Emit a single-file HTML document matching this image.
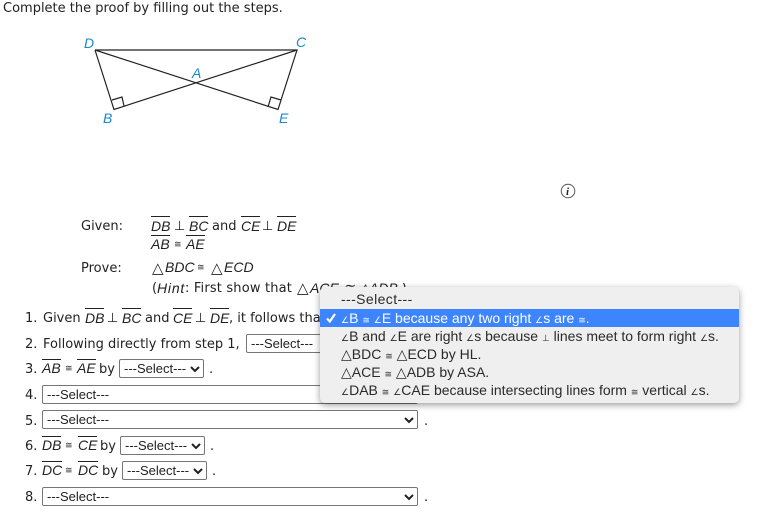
<!DOCTYPE html>
<html><head><meta charset="utf-8">
<style>
html,body{margin:0;padding:0;background:#fff}
body{width:780px;height:527px;position:relative;overflow:hidden;font-family:"DejaVu Sans",sans-serif;font-size:13px;color:#222}
.t{position:absolute;white-space:nowrap;line-height:16px;height:16px}
.m{font-family:"Liberation Sans",sans-serif;font-style:italic;font-size:14px}
.o,.n{position:absolute;white-space:nowrap;line-height:16px;height:16px;font-family:"Liberation Sans",sans-serif;font-style:italic;font-size:14px}
.o:before{content:"";position:absolute;left:0;right:0;top:-1px;border-top:1px solid #222}
.o.h:before{top:-2px}
.c{position:absolute;white-space:nowrap;line-height:16px;font-size:9px;font-family:"DejaVu Sans",sans-serif}
.s{position:absolute;box-sizing:border-box;height:19px;border:1px solid #767676;border-radius:2px;background:#fff;font:13px/17px "Liberation Sans",sans-serif;color:#222;padding-left:4px;white-space:nowrap;overflow:hidden}
.s svg{position:absolute;right:3px;top:5px}
.p{position:absolute;left:320px;top:287px;width:419px;height:116px;background:#efefef;border-radius:5px;box-shadow:0 2px 7px rgba(0,0,0,.4);font:14px/19px "Liberation Sans",sans-serif;color:#2a2a2a}
.r{position:absolute;left:0;width:419px;height:18px;padding-left:21px;box-sizing:border-box;white-space:nowrap}
.a{font-size:9px;font-family:"DejaVu Sans",sans-serif}
.d{font-family:"DejaVu Sans";font-size:14px}
.x{font-family:"DejaVu Sans";font-size:15px}
</style></head><body>
<div class="t" style="left:3px;top:1px">Complete the proof by filling out the steps.</div>

<svg style="position:absolute;left:0;top:0" width="400" height="140">
<g fill="none" stroke="#222" stroke-width="1.200">
<path d="M95 50H297L278 109.500L95 50"/>
<path d="M95 50L114 109.500L297 50"/>
<path d="M112 100L122 97L124 106"/>
<path d="M268 107L271 97L281 100"/>
</g>
<g font-family="Liberation Sans" font-style="italic" font-size="14" fill="#1b87c9">
<text x="84" y="48">D</text><text x="296" y="47">C</text><text x="192" y="78">A</text><text x="103" y="123">B</text><text x="279" y="123">E</text>
</g>
</svg>

<svg style="position:absolute;left:560px;top:183px" width="16" height="16">
<circle cx="8" cy="8" r="6.800" fill="none" stroke="#555"/>
<text x="6" y="12" font-family="Liberation Serif" font-style="italic" font-weight="bold" font-size="11" fill="#222">i</text>
</svg>

<div class="t" style="left:81px;top:219px">Given:</div>
<div class="o h" style="left:151px;top:218px">DB</div><div class="t" style="left:174px;top:219px">⊥</div><div class="o h" style="left:189px;top:218px">BC</div><div class="t" style="left:212px;top:219px">and</div><div class="o h" style="left:241px;top:218px">CE</div><div class="t" style="left:262px;top:219px">⊥</div><div class="o h" style="left:277px;top:218px">DE</div>
<div class="o" style="left:151px;top:236px">AB</div><div class="c" style="left:174px;top:237px">≅</div><div class="o" style="left:186px;top:236px">AE</div>

<div class="t" style="left:81px;top:261px">Prove:</div>
<div class="t x" style="left:152px;top:260px">△</div><div class="n" style="left:165px;top:259px">BDC</div><div class="c" style="left:197px;top:260px">≅</div><div class="t x" style="left:211px;top:260px">△</div><div class="n" style="left:224px;top:259px">ECD</div>
<div class="t" style="left:152px;top:281px">(</div><div class="n" style="left:157px;top:280px;letter-spacing:.8px">Hint</div><div class="t" style="left:185px;top:281px;letter-spacing:.17px">: First show that</div><div class="t x" style="left:297px;top:280px">△</div><div class="n" style="left:310px;top:280px">ACE ≅ △ADB.)</div>

<div class="t" style="left:25px;top:311px">1.</div><div class="t" style="left:43px;top:311px">Given</div>
<div class="o h" style="left:85px;top:310px">DB</div><div class="t" style="left:107px;top:311px">⊥</div><div class="o h" style="left:122px;top:310px">BC</div><div class="t" style="left:145px;top:311px">and</div><div class="o h" style="left:173px;top:310px">CE</div><div class="t" style="left:195px;top:311px">⊥</div><div class="o h" style="left:210px;top:310px">DE</div><div class="t" style="left:229px;top:311px">, it follows that</div>

<div class="t" style="left:25px;top:337px">2.</div><div class="t" style="left:43px;top:337px">Following directly from step 1,</div>
<div class="s" style="left:246px;top:334px;width:90px">---Select---</div>

<div class="t" style="left:25px;top:362px">3.</div><div class="o" style="left:42px;top:360px">AB</div><div class="c" style="left:65px;top:361px">≅</div><div class="o" style="left:77px;top:360px">AE</div><div class="t" style="left:99px;top:362px">by</div>
<div class="s" style="left:119px;top:359px;width:85px">---Select---<svg width="10" height="8"><path d="M1 2L5 6L9 2" fill="none" stroke="#222" stroke-width="2"/></svg></div><div class="t" style="left:209px;top:362px">.</div>

<div class="t" style="left:25px;top:388px">4.</div>
<div class="s" style="left:42px;top:385px;width:376px">---Select---</div>

<div class="t" style="left:25px;top:414px">5.</div>
<div class="s" style="left:42px;top:410px;width:376px">---Select---<svg width="10" height="8"><path d="M1 2L5 6L9 2" fill="none" stroke="#222" stroke-width="2"/></svg></div><div class="t" style="left:424px;top:414px">.</div>

<div class="t" style="left:25px;top:439px">6.</div><div class="o" style="left:42px;top:437px">DB</div><div class="c" style="left:65px;top:438px">≅</div><div class="o" style="left:78px;top:437px">CE</div><div class="t" style="left:100px;top:439px">by</div>
<div class="s" style="left:120px;top:436px;width:85px">---Select---<svg width="10" height="8"><path d="M1 2L5 6L9 2" fill="none" stroke="#222" stroke-width="2"/></svg></div><div class="t" style="left:210px;top:439px">.</div>

<div class="t" style="left:25px;top:464px">7.</div><div class="o" style="left:42px;top:462px">DC</div><div class="c" style="left:65px;top:463px">≅</div><div class="o" style="left:78px;top:462px">DC</div><div class="t" style="left:102px;top:464px">by</div>
<div class="s" style="left:122px;top:461px;width:85px">---Select---<svg width="10" height="8"><path d="M1 2L5 6L9 2" fill="none" stroke="#222" stroke-width="2"/></svg></div><div class="t" style="left:212px;top:464px">.</div>

<div class="t" style="left:25px;top:490px">8.</div>
<div class="s" style="left:42px;top:487px;width:376px">---Select---<svg width="10" height="8"><path d="M1 2L5 6L9 2" fill="none" stroke="#222" stroke-width="2"/></svg></div><div class="t" style="left:424px;top:490px">.</div>

<div class="p">
<div class="r" style="top:3px;letter-spacing:.4px">---Select---</div>
<div class="r" style="top:22px;background:#3d84ff;color:#fff"><span class="a">∠</span>B <span class="a">≅</span> <span class="a">∠</span>E because any two right <span class="a">∠</span>s are <span class="a">≅</span>.</div>
<svg style="position:absolute;left:5px;top:25px" width="12" height="12"><path d="M2 6.500L4.800 9.500L10 2" fill="none" stroke="#fff" stroke-width="2.200"/></svg>
<div class="r" style="top:40px"><span class="a">∠</span>B and <span class="a">∠</span>E are right <span class="a">∠</span>s because <span class="a">⊥</span> lines meet to form right <span class="a">∠</span>s.</div>
<div class="r" style="top:58px"><span class="d">△</span>BDC <span class="a">≅</span> <span class="d">△</span>ECD by HL.</div>
<div class="r" style="top:76px"><span class="d">△</span>ACE <span class="a">≅</span> <span class="d">△</span>ADB by ASA.</div>
<div class="r" style="top:94px"><span class="a">∠</span>DAB <span class="a">≅</span> <span class="a">∠</span>CAE because intersecting lines form <span class="a">≅</span> vertical <span class="a">∠</span>s.</div>
</div>
</body></html>
